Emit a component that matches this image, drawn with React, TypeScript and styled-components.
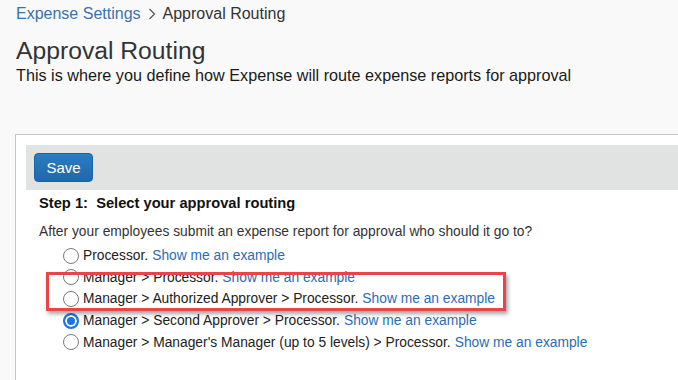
import React from "react";
import styled, { createGlobalStyle } from "styled-components";

const GlobalStyle = createGlobalStyle`
  html, body {
    margin: 0;
    padding: 0;
    background: #f9f9f9;
    font-family: "Liberation Sans", Arial, sans-serif;
    color: #333;
  }
`;

const Page = styled.div`
  position: relative;
  width: 678px;
  height: 380px;
  overflow: hidden;
  padding: 4px 0 0 16px;
  box-sizing: border-box;
`;

const Breadcrumb = styled.div`
  display: flex;
  align-items: center;
  gap: 7px;
  font-size: 16px;
  line-height: 20px;
  color: #333;
`;

const Crumb = styled.a`
  color: #3a72ad;
  text-decoration: none;
`;

const Chevron = styled.svg`
  width: 8px;
  height: 12px;
`;

const Title = styled.h1`
  margin: 13px 0 0;
  font-size: 24.7px;
  font-weight: normal;
  line-height: 28px;
  color: #333;
`;

const Subtitle = styled.p`
  margin: 0;
  font-size: 16.2px;
  line-height: 20px;
  color: #1a1a1a;
`;

const Panel = styled.section`
  margin-top: 49px;
  margin-left: -1px;
  background: #fff;
  border-top: 1px solid #c6c6c6;
  border-left: 1px solid #c6c6c6;
  padding: 10px 0 0 10px;
  height: 260px;
`;

const Toolbar = styled.div`
  display: flex;
  align-items: center;
  height: 45px;
  padding: 0 8px;
  background: #e1e2e2;
`;

const SaveButton = styled.button`
  width: 59px;
  height: 29px;
  border: 1px solid #1d62a3;
  border-radius: 4px;
  background: linear-gradient(#2b7cc2, #1f68aa);
  color: #fff;
  font-family: "Liberation Sans", Arial, sans-serif;
  font-size: 15px;
  padding: 0;
`;

const Content = styled.div`
  padding: 4px 0 0 13px;
`;

const StepTitle = styled.h2`
  margin: 0;
  font-size: 14.7px;
  font-weight: bold;
  line-height: 18px;
  color: #111;
`;

const Question = styled.p`
  margin: 11px 0 0;
  font-size: 13.8px;
  line-height: 18px;
  color: #333;
`;

const OptionList = styled.div`
  display: flex;
  flex-direction: column;
  padding: 4px 0 0 24px;
`;

const Option = styled.label`
  display: flex;
  align-items: center;
  gap: 4px;
  height: 21.6px;
  font-size: 13.8px;
  color: #222;
  white-space: nowrap;
`;

const Radio = styled.input.attrs({ type: "radio" })`
  appearance: none;
  margin: 0;
  width: 16px;
  height: 16px;
  border-radius: 50%;
  border: 1px solid #7a7a7a;
  background: #fff;
  box-sizing: border-box;

  &:checked {
    border: 2px solid #1a73e8;
    box-shadow: inset 0 0 0 2px #fff;
    background: #1a73e8;
  }
`;

const ExampleLink = styled.a`
  color: #2b6cb5;
  text-decoration: none;
  margin-left: 4px;
`;

const Highlight = styled.div`
  position: absolute;
  left: 46px;
  top: 272px;
  width: 460px;
  height: 39px;
  box-sizing: border-box;
  border: 3px solid #ea4449;
  box-shadow: 2px 3px 4px rgba(0, 0, 0, 0.35);
  pointer-events: none;
`;

const options = [
  { label: "Processor.", checked: false },
  { label: "Manager > Processor.", checked: false },
  { label: "Manager > Authorized Approver > Processor.", checked: false },
  { label: "Manager > Second Approver > Processor.", checked: true },
  { label: "Manager > Manager's Manager (up to 5 levels) > Processor.", checked: false },
];

const App: React.FC = () => {
  return (
    <Page>
      <GlobalStyle />
      <Breadcrumb>
        <Crumb href="#">Expense Settings</Crumb>
        <Chevron viewBox="0 0 8 12">
          <path d="M1.5 1 L6.5 6 L1.5 11" fill="none" stroke="#555" strokeWidth="1.2" />
        </Chevron>
        <span>Approval Routing</span>
      </Breadcrumb>
      <Title>Approval Routing</Title>
      <Subtitle>
        This is where you define how Expense will route expense reports for approval
      </Subtitle>
      <Panel>
        <Toolbar>
          <SaveButton>Save</SaveButton>
        </Toolbar>
        <Content>
          <StepTitle>Step 1:&nbsp; Select your approval routing</StepTitle>
          <Question>
            After your employees submit an expense report for approval who should it go to?
          </Question>
          <OptionList>
            {options.map((o) => (
              <Option key={o.label}>
                <Radio name="routing" defaultChecked={o.checked} />
                <span>
                  {o.label}
                  <ExampleLink href="#">Show me an example</ExampleLink>
                </span>
              </Option>
            ))}
          </OptionList>
        </Content>
      </Panel>
      <Highlight />
    </Page>
  );
};

export default App;
